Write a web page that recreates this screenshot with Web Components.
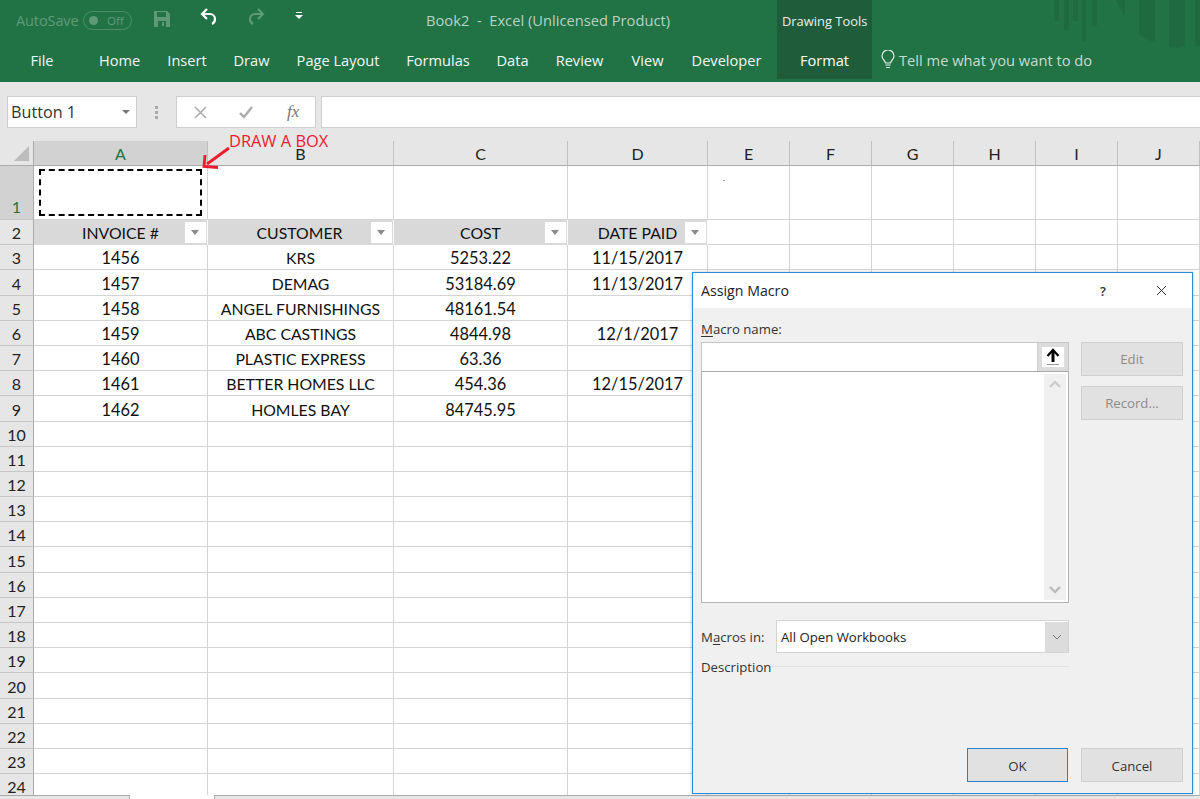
<!DOCTYPE html>
<html><head><meta charset="utf-8"><style>
html,body{margin:0;padding:0;height:799px;overflow:hidden;background:#fff}
body{font-family:"Open Sans","Liberation Sans",sans-serif;position:relative;width:1200px}
</style></head><body>
<xl-ribbon></xl-ribbon>
<xl-formula-bar></xl-formula-bar>
<xl-sheet></xl-sheet>
<xl-annotation></xl-annotation>
<xl-dialog></xl-dialog>
<script>
class XlRibbon extends HTMLElement{constructor(){super();const s=this.attachShadow({mode:'open'});
const tabs=[['File',24,30],['Home',41,45],['Insert',38,28],['Draw',35,28],['Page Layout',82,28],['Formulas',62,28],['Data',31,28],['Review',47,28],['View',33,28],['Developer',71,27]];
s.innerHTML=`<style>
:host{display:block;height:82px;background:#217346;position:relative;color:#fff;font:14px "Open Sans",sans-serif;overflow:hidden}
.top{height:41px;display:flex;align-items:center;position:relative}
.auto{margin-left:16px;width:67px;color:#5f9a78;font-size:14.5px;letter-spacing:-.1px}
.tog{height:17px;border:1px solid #4c8d68;border-radius:10px;display:flex;align-items:center;color:#5f9a78;font-size:11.5px;gap:9px;padding-left:5px;box-sizing:content-box;width:42px}
.tog i{width:9px;height:9px;border-radius:50%;background:#5f9a78;display:block}
.qat{margin-left:21px;display:flex;align-items:center}
.title{position:absolute;left:426px;top:10px;color:#b6d2c2;font-size:14.7px;white-space:pre}
.ctx{position:absolute;left:777px;top:0;width:95px;height:79px;background:#1e5c3a}
.ctx span{position:absolute;left:5px;top:12px;font-size:12.9px;color:#e8f0ea;white-space:nowrap}
.tabs{display:flex;height:41px;align-items:center;position:relative;padding-bottom:2px;box-sizing:border-box;margin-top:-1px}
.tab{text-align:center;white-space:nowrap;color:#f2f7f4;font-size:14.6px;flex:none;display:flex;justify-content:center}
.tell{display:flex;align-items:center;gap:4px;color:#c5dccf;font-size:14.7px;margin-left:9px;white-space:nowrap}
svg{display:block}
.wm{position:absolute;right:0;top:0}
</style>
<svg class="wm" width="146" height="50" viewBox="1054 0 146 50" fill="#1f6a41"><rect x="1054" y="0" width="5" height="21"/><rect x="1064" y="0" width="5" height="30"/><rect x="1073" y="0" width="5" height="21"/><rect x="1082" y="0" width="4" height="41"/><rect x="1092" y="0" width="5" height="26"/><path d="M1116 0h9v18zM1139 0h16v43l-16-8zM1169 0h16v46l-8 2-8-1zM1195 0h5v46h-5z"/></svg>
<div class="ctx"><span>Drawing Tools</span></div>
<div class="top"><div class="auto">AutoSave</div><div class="tog"><i></i>Off</div>
<div class="qat">
<svg width="18" height="18" viewBox="0 0 18 18" style="margin-top:-4px"><path d="M1 1h13l3 3v13H1z" fill="#5f9a78"/><rect x="4" y="2" width="9" height="5" fill="#217346"/><rect x="5" y="11" width="8" height="6" fill="#217346"/><rect x="9" y="12" width="2" height="4" fill="#5f9a78"/></svg>
<svg width="20" height="20" viewBox="0 0 20 20" style="margin-left:28px;margin-top:-8px" fill="none" stroke="#fff" stroke-width="2.200"><path d="M8 2 3 7l5 5M3 7h8a5 5 0 0 1 5 5c0 2-1 4-3 5"/></svg>
<svg width="20" height="20" viewBox="0 0 20 20" style="margin-left:27px;margin-top:-8px" fill="none" stroke="#5f9a78" stroke-width="2.200"><path d="M12 2l5 5-5 5M17 7H9a5 5 0 0 0-5 5c0 2 1 4 3 5"/></svg>
<svg width="8" height="8" viewBox="0 0 8 8" style="margin-left:29px;margin-top:-9px" fill="#fff"><rect x="1" y="0" width="6" height="1"/><path d="M0 3h8L4 7z"/></svg>
</div><div class="title">Book2  -  Excel (Unlicensed Product)</div></div>
<div class="tabs">${tabs.map(t=>`<div class="tab" style="width:${t[1]}px;margin-left:${t[2]}px">${t[0]}</div>`).join('')}
<div class="tab" style="width:95px;margin-left:15px;color:#fff">Format</div>
<div class="tell"><svg width="14" height="19" viewBox="0 0 14 19" fill="none" stroke="#e3eee8" stroke-width="1.2"><path d="M4.500 13c0-2-3.500-3.500-3.500-7a6 6 0 0 1 12 0c0 3.500-3.500 5-3.500 7zM4.500 15h5M5 17.500h4"/></svg><span>Tell me what you want to do</span></div></div>`;}}
customElements.define('xl-ribbon',XlRibbon);

class XlFormulaBar extends HTMLElement{constructor(){super();const s=this.attachShadow({mode:'open'});
s.innerHTML=`<style>
:host{display:flex;height:59px;box-sizing:border-box;background:#e6e6e6;padding:14px 0 13px 7px;align-items:stretch;font:16px "Open Sans",sans-serif;color:#333}
.box{background:#fff;border:1px solid #cfcfcf;box-sizing:border-box;display:flex;align-items:center}
.name{width:130px;padding-left:3px;justify-content:space-between;padding-right:6px;font-size:16.2px}
.name i{width:0;height:0;border:4px solid transparent;border-top:4px solid #777;border-bottom:0;display:block}
.dots{width:39px;display:flex;flex-direction:column;align-items:center;justify-content:center;gap:2px}
.dots b{width:3px;height:3px;background:#aaa;display:block}
.fx{width:140px;padding-left:17px;color:#999}
.fx svg:nth-child(2){margin-left:32px}
.fx em{font:italic 17px "Liberation Serif",serif;color:#777;margin-left:33px}
.in{flex:1;margin-left:5px;border-right:0}
svg{display:block}
</style>
<div class="box name"><span>Button 1</span><i></i></div>
<div class="dots"><b></b><b></b><b></b></div>
<div class="box fx"><svg width="13" height="13" viewBox="0 0 13 13" stroke="#aaa" stroke-width="1.500"><path d="M1 1l11 11M12 1 1 12"/></svg><svg width="15" height="13" viewBox="0 0 15 13" fill="none" stroke="#aaa" stroke-width="2.400"><path d="M1 7l4 4 8-10"/></svg><em>fx</em></div>
<div class="box in"></div>`;}}
customElements.define('xl-formula-bar',XlFormulaBar);

class XlSheet extends HTMLElement{constructor(){super();const s=this.attachShadow({mode:'open'});
const cols=['A','B','C','D','E','F','G','H','I','J'];
const off=[0,-1,0,0];
const data=[['INVOICE #','CUSTOMER','COST','DATE PAID'],['1456','KRS','5253.22','11/15/2017'],['1457','DEMAG','53184.69','11/13/2017'],['1458','ANGEL FURNISHINGS','48161.54',''],['1459','ABC CASTINGS','4844.98','12/1/2017'],['1460','PLASTIC EXPRESS','63.36',''],['1461','BETTER HOMES LLC','454.36','12/15/2017'],['1462','HOMLES BAY','84745.95','']];
let h=`<div class="corner"><i></i></div>`;
cols.forEach((c,i)=>h+=`<div class="ch${i==0?' sel':''}">${c}</div>`);
for(let r=1;r<=24;r++){h+=`<div class="rh${r==1?' sel':''}"><span>${r}</span></div>`;
 for(let c=0;c<10;c++){const v=(r>=2&&r<=9&&c<4)?data[r-2][c]:'';const hd=r==2&&c<4;
  const num=/^\d/.test(v);
  h+=`<div class="c${hd?' hd':''}">${v?`<span class="${num?'n':'t'}" ${hd?`style="left:${off[c]}px"`:''}>${v}</span>`:''}${hd?'<u></u>':''}</div>`;}}
s.innerHTML=`<style>
:host{display:block;position:relative;height:658px;overflow:hidden;background:#fff;font:16px Lato,Carlito,sans-serif;color:#111}
.g{display:grid;grid-template-columns:34px 174px 186px 174px 140px 82px 82px 82px 82px 82px 82px;grid-template-rows:25px 54px repeat(23,25.2px)}
.corner{background:#e6e6e6;border-right:1px solid #ababab;border-bottom:1px solid #ababab;box-sizing:border-box;position:relative}
.corner i{position:absolute;right:4px;bottom:4px;border-style:solid;border-width:0 0 15px 15px;border-color:transparent transparent #bcbcbc transparent}
.ch{background:#e6e6e6;border-right:1px solid #c0c0c0;border-bottom:1px solid #ababab;box-sizing:border-box;text-align:center;line-height:25px;color:#222}
.ch.sel{background:#d2d2d2;color:#217346}
.rh{background:#e6e6e6;border-right:1px solid #ababab;border-bottom:1px solid #c6c6c6;box-sizing:border-box;display:flex;align-items:flex-end;justify-content:center;line-height:24px;color:#222}
.rh span{position:relative;top:1px}
.rh.sel{background:#d2d2d2;color:#217346}
.rh.sel span{top:0}
.c{border-right:1px solid #d4d4d4;border-bottom:1px solid #d4d4d4;box-sizing:border-box;display:flex;align-items:flex-end;justify-content:center;position:relative;line-height:23px;white-space:nowrap}
.c span{position:relative;top:0}
.c span.n{font-size:16.4px}
.c span.t{font-size:15.8px}
.hd{background:#d9d9d9;border-right-color:#fff;border-bottom-color:#d9d9d9}
.hd u{position:absolute;right:1px;top:2px;width:21px;height:21px;background:#fff;display:block}
.hd u::after{content:"";position:absolute;left:6px;top:8px;border:4.500px solid transparent;border-top:5px solid #8a8a8a;border-bottom:0}
.speck{position:absolute;left:723px;top:39px;width:2px;height:1px;background:#999}
.tabs{position:absolute;left:0;right:0;bottom:0;background:#e6e6e6;border-top:1px solid #ababab;box-sizing:border-box;height:4px}
.tabs b{position:absolute;left:129px;width:84px;top:-1px;bottom:0;background:#fff;border:solid #ababab;border-width:0 1px}
</style><div class="g">${h}</div><div class="speck"></div>
<div class="tabs"><b></b></div>`;}}
customElements.define('xl-sheet',XlSheet);

class XlAnnotation extends HTMLElement{constructor(){super();const s=this.attachShadow({mode:'open'});
s.innerHTML=`<style>
:host{display:block;position:absolute;left:0;top:0;width:0;height:0}
.box{position:absolute;left:39px;top:169px;width:159px;height:43px;border:2px dashed #000}
.lab{position:absolute;left:229px;top:130px;color:#ed1c2e;font:16.4px/21px "Open Sans",sans-serif;white-space:nowrap}
svg{position:absolute;left:200px;top:146px}
</style><div class="box"></div>
<svg width="32" height="24" viewBox="200 146 32 24" fill="none" stroke="#ed1c2e" stroke-width="2.800"><path d="M229 148 207 164M205 155l-1 11.500 14 1"/></svg>
<div class="lab">DRAW A BOX</div>`;}}
customElements.define('xl-annotation',XlAnnotation);

class XlDialog extends HTMLElement{constructor(){super();const s=this.attachShadow({mode:'open'});
s.innerHTML=`<style>
:host{display:flex;flex-direction:column;position:absolute;left:692px;top:272px;width:501px;height:522px;box-sizing:border-box;border:1.500px solid #2b8ad6;background:#f0f0f0;font:13.2px "Open Sans",sans-serif;color:#333;box-shadow:0 0 3px rgba(0,0,0,.25)}
.tb{height:35px;background:#fff;display:flex;align-items:center;padding:0 25px 0 8px;flex:none;font-size:14.2px;color:#222}
.tb span{flex:1}
.tb em{font-style:normal;font-size:13px;margin-right:50px;color:#333;font-weight:600}
.body{flex:1;display:grid;grid-template-columns:368px 102px;column-gap:12px;padding:0 9px 11px 8px;min-height:0}
.left{display:flex;flex-direction:column;min-height:0}
.lbl{height:34px;line-height:42px;white-space:nowrap}
u{text-decoration-thickness:1px;text-underline-offset:2px}
.input{height:30px;background:#fff;border:1px solid #c4c4c4;border-bottom:1px solid #a8a8a8;box-sizing:border-box;display:flex;justify-content:flex-end;flex:none}
.up{width:30px;background:#dcdcdc;display:flex;align-items:center;justify-content:center;border-left:1px solid #d0d0d0}
.up div{background:#fff;width:22px;height:20px;display:flex;align-items:center;justify-content:center}
.list{height:231px;background:#fff;border:1px solid #b4b4b4;border-top:0;box-sizing:border-box;display:flex;justify-content:flex-end;padding:2px;flex:none}
.sb{width:22px;background:#f0f0f0;display:flex;flex-direction:column;justify-content:space-between;align-items:center;padding:6px 0 6px}
.mi{display:flex;align-items:center;margin-top:17px;height:33px;flex:none}
.mi span{width:75px}
.sel{flex:1;height:33px;background:#fff;border:1px solid #d4d4d4;box-sizing:border-box;display:flex;align-items:center;padding-left:4px;color:#222}
.sel span{flex:1}
.sel i{width:23px;height:30px;background:#dcdcdc;display:flex;align-items:center;justify-content:center}
.desc{display:flex;align-items:center;height:26px;margin-top:1px;flex:none}
.desc p{flex:1;height:1px;background:#e2e2e2;margin:0 0 1px 0}
.foot{margin-top:auto;display:flex;justify-content:flex-end;flex:none;width:100%;padding-right:1px;box-sizing:border-box}
.right{display:flex;flex-direction:column;padding-top:34px;gap:10px}
.btn{height:34px;background:#e1e1e1;border:1px solid #cfcfcf;box-sizing:border-box;display:flex;align-items:center;justify-content:center;color:#333;padding-top:1px}
.dis{color:#8c8c8c;padding-top:0}
.ok{width:101px;border:1.500px solid #2b7fc4}
.last{margin-top:auto}
svg{display:block}
</style>
<div class="tb"><span>Assign Macro</span><em>?</em><svg width="11" height="11" viewBox="0 0 11 11" stroke="#333" stroke-width="1"><path d="M1 1l9 9M10 1l-9 9"/></svg></div>
<div class="body"><div class="left">
<div class="lbl"><u>M</u>acro name:</div>
<div class="input"><div class="up"><div><svg width="14" height="18" viewBox="0 0 14 18" fill="none"><path d="M7 14V3" stroke="#000" stroke-width="3"/><path d="M1.500 8 7 2l5.500 6" stroke="#000" stroke-width="2.200"/><rect x="1" y="16" width="12" height="1" fill="#999"/></svg></div></div></div>
<div class="list"><div class="sb"><svg width="12" height="8" viewBox="0 0 12 8" fill="none" stroke="#ccc" stroke-width="2.400"><path d="M1 7l5-5 5 5"/></svg><svg width="12" height="8" viewBox="0 0 12 8" fill="none" stroke="#bbb" stroke-width="2.400"><path d="M1 1l5 5 5-5"/></svg></div></div>
<div class="mi"><span>M<u>a</u>cros in:</span><div class="sel"><span>All Open Workbooks</span><i><svg width="10" height="6" viewBox="0 0 10 6" fill="none" stroke="#777"><path d="M1 1l4 4 4-4"/></svg></i></div></div>
<div class="desc">Description<p></p></div>
<div class="foot"><div class="btn ok">OK</div></div>
</div><div class="right"><div class="btn dis">Edit</div><div class="btn dis">Record...</div><div class="btn last">Cancel</div></div></div>`;}}
customElements.define('xl-dialog',XlDialog);
</script></body></html>
